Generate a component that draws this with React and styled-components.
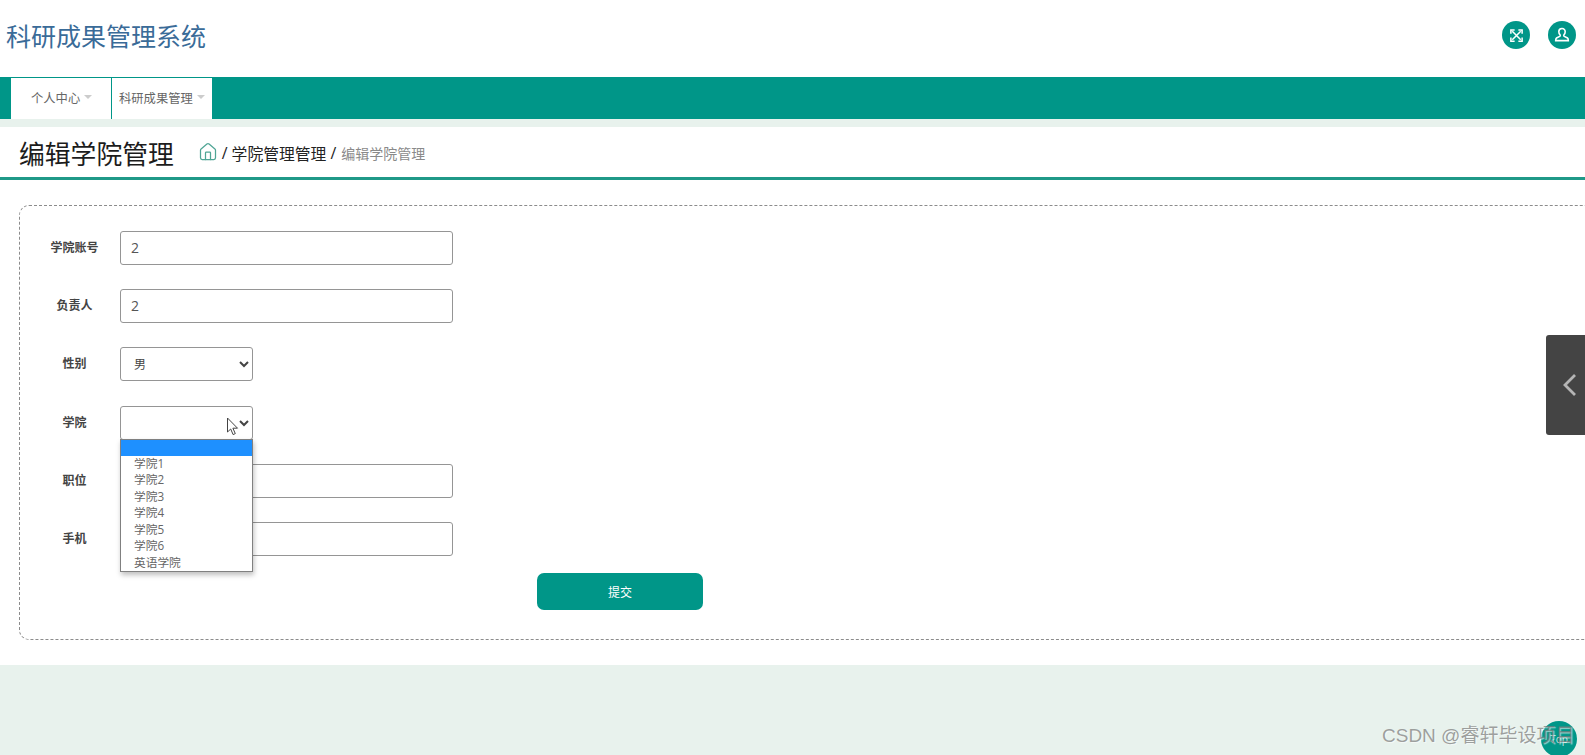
import React from "react";
import styled, { createGlobalStyle } from "styled-components";
import { House } from "lucide-react";

const teal = "#009688";
const cjk = `"Open Sans", "Noto Sans CJK SC", sans-serif`;

const collegeOptions = ["学院1", "学院2", "学院3", "学院4", "学院5", "学院6", "英语学院"];

export default function App() {
  return (
    <Page>
      <GlobalStyle />
      <Header>
        <SiteTitle>科研成果管理系统</SiteTitle>
        <HeaderActions>
          <RoundIcon>
            <svg width="15" height="15" viewBox="0 0 16 16" fill="none" stroke="#fff" strokeWidth="1.6">
              <path d="M3.5 3.5l9 9M12.5 3.5l-9 9" />
              <path d="M2 6V2h4M10 2h4v4M14 10v4h-4M6 14H2v-4" />
            </svg>
          </RoundIcon>
          <RoundIcon>
            <svg width="16" height="16" viewBox="0 0 16 16" fill="none" stroke="#fff" strokeWidth="1.6">
              <path d="M8 1.5c-2 0-3.2 1.4-3.2 3.3 0 1.3.6 2.4 1.3 3 .3.5.2 1.2-.4 1.6L2.5 11c-.6.4-.8 1-.8 2.6h12.6c0-1.6-.2-2.2-.8-2.6l-3.2-1.6c-.6-.4-.7-1.1-.4-1.6.7-.6 1.3-1.7 1.3-3 0-1.9-1.2-3.3-3.2-3.3z" />
            </svg>
          </RoundIcon>
        </HeaderActions>
      </Header>

      <NavBar>
        <NavTab $width={100} $pad={20}>
          个人中心<Caret />
        </NavTab>
        <NavTab $width={100} $pad={7}>
          科研成果管理<Caret />
        </NavTab>
      </NavBar>

      <TitleBand>
        <PageTitle>编辑学院管理</PageTitle>
        <Crumbs>
          <HomeIcon>
            <House size={20} strokeWidth={1.5} />
          </HomeIcon>
          <CrumbSep>/</CrumbSep>
          <span>学院管理管理</span>
          <CrumbSep>/</CrumbSep>
          <CrumbCurrent>编辑学院管理</CrumbCurrent>
        </Crumbs>
      </TitleBand>

      <Content>
        <FormPanel>
          <FormRow>
            <RowLabel>学院账号</RowLabel>
            <TextInput defaultValue="2" />
          </FormRow>
          <FormRow>
            <RowLabel>负责人</RowLabel>
            <TextInput defaultValue="2" />
          </FormRow>
          <FormRow>
            <RowLabel>性别</RowLabel>
            <SelectBox defaultValue="男">
              <option>男</option>
              <option>女</option>
            </SelectBox>
          </FormRow>
          <FormRow>
            <RowLabel>学院</RowLabel>
            <SelectWrap>
              <SelectBox defaultValue="">
                <option value=""></option>
                {collegeOptions.map((name) => (
                  <option key={name}>{name}</option>
                ))}
              </SelectBox>
              <Pointer width="14" height="19" viewBox="0 0 14 19">
                <path
                  d="M1.5 1v14l3.2-3 2.4 5.6 2.2-1-2.4-5.4h4.6z"
                  fill="#fff"
                  stroke="#444"
                  strokeWidth="1"
                />
              </Pointer>
              <OptionList>
                <OptionItem $active />
                {collegeOptions.map((name) => (
                  <OptionItem key={name}>{name}</OptionItem>
                ))}
              </OptionList>
            </SelectWrap>
          </FormRow>
          <FormRow>
            <RowLabel>职位</RowLabel>
            <TextInput />
          </FormRow>
          <FormRow>
            <RowLabel>手机</RowLabel>
            <TextInput />
          </FormRow>
          <SubmitButton>提交</SubmitButton>
        </FormPanel>
      </Content>

      <Footer />

      <SideTab>
        <svg width="16" height="24" viewBox="0 0 16 24" fill="none" stroke="#b5b5b5" strokeWidth="2.8">
          <path d="M13 2 3 12l10 10" />
        </svg>
      </SideTab>
      <TopButton>Top</TopButton>
      <Watermark>CSDN @睿轩毕设项目</Watermark>
    </Page>
  );
}

const GlobalStyle = createGlobalStyle`
  html, body {
    margin: 0;
    padding: 0;
    background: #fff;
    overflow: hidden;
  }
  * {
    box-sizing: border-box;
  }
`;

const Page = styled.div`
  position: relative;
  display: flex;
  flex-direction: column;
  width: 1585px;
  height: 755px;
  overflow: hidden;
  background: #e8f2ed;
  font-family: ${cjk};
`;

const Header = styled.header`
  display: flex;
  align-items: center;
  justify-content: space-between;
  height: 77px;
  padding: 0 9px 7px 6px;
  background: #fff;
`;

const SiteTitle = styled.h1`
  margin: 0;
  font-size: 25px;
  font-weight: 400;
  color: #3a6b98;
`;

const HeaderActions = styled.div`
  display: flex;
  gap: 18px;
`;

const RoundIcon = styled.span`
  display: flex;
  align-items: center;
  justify-content: center;
  width: 28px;
  height: 28px;
  border-radius: 50%;
  background: ${teal};
  color: #fff;
`;

const NavBar = styled.nav`
  display: flex;
  gap: 1px;
  height: 42px;
  padding: 1px 0 0 11px;
  background: ${teal};
`;

const NavTab = styled.div`
  display: flex;
  align-items: center;
  width: ${(p) => p.$width}px;
  padding: 0 0 2px ${(p) => p.$pad}px;
  background: #fff;
  font-size: 12.3px;
  color: #666;
`;

const Caret = styled.i`
  width: 0;
  height: 0;
  margin: 0 0 2px 4px;
  border-left: 4px solid transparent;
  border-right: 4px solid transparent;
  border-top: 4px solid #ccc;
`;

const TitleBand = styled.div`
  display: flex;
  align-items: center;
  height: 53px;
  margin-top: 8px;
  padding: 2px 0 0 19px;
  background: #fff;
  border-bottom: 3px solid #1f9988;
`;

const PageTitle = styled.h2`
  margin: 0 24px 0 0;
  font-size: 25.8px;
  font-weight: 400;
  color: #1c1c1c;
`;

const Crumbs = styled.div`
  display: flex;
  align-items: center;
  font-size: 15.8px;
  color: #222;
`;

const HomeIcon = styled.span`
  display: flex;
  margin-bottom: 3px;
  color: #4fa595;
`;

const CrumbSep = styled.span`
  margin: 0 4px;
`;

const CrumbCurrent = styled.span`
  margin-left: 1px;
  font-size: 14px;
  color: #8a8a8a;
`;

const Content = styled.main`
  height: 485px;
  padding: 25px 0 0 19px;
  background: #fff;
`;

const FormPanel = styled.form`
  display: flex;
  flex-direction: column;
  gap: 24.4px;
  width: 1600px;
  height: 435px;
  padding: 24.5px 0 0 11px;
  border: 1px dashed #8c8c8c;
  border-radius: 10px;
`;

const FormRow = styled.div`
  display: flex;
  align-items: center;
  height: 34px;
`;

const RowLabel = styled.label`
  flex: 0 0 87px;
  margin-right: 2px;
  padding-bottom: 2px;
  text-align: center;
  font-size: 12px;
  font-weight: 700;
  color: #444;
`;

const TextInput = styled.input`
  width: 333px;
  height: 34px;
  padding: 0 10px;
  border: 1px solid #959595;
  border-radius: 3px;
  outline: none;
  background: #fff;
  font-family: ${cjk};
  font-size: 14px;
  color: #555;
`;

const SelectWrap = styled.div`
  position: relative;
  display: flex;
`;

const SelectBox = styled.select`
  width: 133px;
  height: 34px;
  padding: 0 9px;
  border: 1px solid #959595;
  border-radius: 3px;
  background: #fff;
  font-family: ${cjk};
  font-size: 12px;
  color: #444;
`;

const Pointer = styled.svg`
  position: absolute;
  top: 11px;
  left: 106px;
`;

const OptionList = styled.ul`
  position: absolute;
  top: 33px;
  left: 0;
  z-index: 2;
  width: 133px;
  margin: 0;
  padding: 0;
  list-style: none;
  background: #fff;
  border: 1px solid #808080;
  box-shadow: 1px 3px 5px rgba(0, 0, 0, 0.25);
`;

const OptionItem = styled.li`
  height: ${(p) => (p.$active ? 16 : 16.5)}px;
  padding-left: 13px;
  background: ${(p) => (p.$active ? "#1e90ff" : "#fff")};
  font-size: 11.7px;
  line-height: 15.5px;
  color: #666;
`;

const SubmitButton = styled.button`
  width: 166px;
  height: 37px;
  margin: -7.5px 0 0 506px;
  border: none;
  border-radius: 7px;
  background: ${teal};
  font-family: ${cjk};
  font-size: 12px;
  color: #fff;
`;

const Footer = styled.footer`
  flex: 1;
  background: #e8f2ed;
`;

const SideTab = styled.div`
  position: absolute;
  top: 335px;
  right: 0;
  display: flex;
  align-items: center;
  justify-content: flex-end;
  width: 39px;
  height: 100px;
  padding: 0 7px 0 0;
  background: #444;
  border-radius: 3px 0 0 3px;
`;

const TopButton = styled.div`
  position: absolute;
  left: 1541px;
  bottom: -2px;
  display: flex;
  align-items: center;
  justify-content: center;
  width: 36px;
  height: 36px;
  border-radius: 50%;
  background: ${teal};
  font-size: 10px;
  color: #cfe9e4;
`;

const Watermark = styled.div`
  position: absolute;
  left: 1382px;
  top: 720px;
  font-family: "Liberation Sans", "Noto Sans CJK SC", sans-serif;
  font-size: 19px;
  white-space: nowrap;
  color: rgba(120, 120, 120, 0.7);
  text-shadow: 1px 1px 1px rgba(255, 255, 255, 0.6);
`;
